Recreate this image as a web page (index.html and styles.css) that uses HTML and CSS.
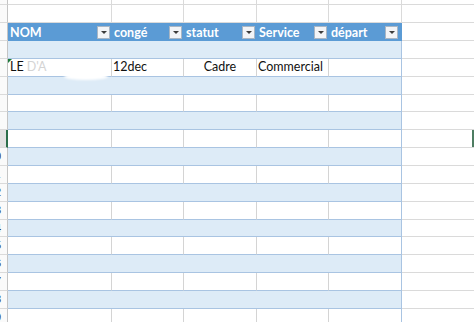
FILE: index.html
```html
<!DOCTYPE html>
<html lang="fr">
<head>
<meta charset="utf-8">
<link rel="stylesheet" href="styles.css">
</head>
<body>
<div class="sheet">
  <div class="row"><div class="rh"></div><div class="c"></div><div class="c"></div><div class="c"></div><div class="c"></div><div class="c"></div><div class="c f"></div></div>
  <div class="row"><div class="rh"><span>2</span></div><div class="c"></div><div class="c"></div><div class="c"></div><div class="c"></div><div class="c"></div><div class="c f"></div></div>
  <div class="row">
    <div class="rh"><span>3</span></div>
    <div class="th"><span>NOM</span><span class="btn"></span></div>
    <div class="th"><span>congé</span><span class="btn"></span></div>
    <div class="th"><span>statut</span><span class="btn"></span></div>
    <div class="th"><span>Service</span><span class="btn"></span></div>
    <div class="th th-last"><span>départ</span><span class="btn"></span></div>
    <div class="c f"></div>
  </div>
  <div class="row"><div class="rh"><span>4</span></div><div class="band"></div><div class="c f"></div></div>
  <div class="row">
    <div class="rh"><span>5</span></div>
    <div class="tw name"><span class="flag"></span>LE <span class="faint">D'A</span><span class="smudge"></span></div>
    <div class="tw">12dec</div>
    <div class="tw center">Cadre</div>
    <div class="tw">Commercial</div>
    <div class="tw last"></div>
    <div class="c f"></div>
  </div>
  <div class="row"><div class="rh"><span>6</span></div><div class="band"></div><div class="c f"></div></div>
  <div class="row"><div class="rh"><span>7</span></div><div class="tw"></div><div class="tw"></div><div class="tw"></div><div class="tw"></div><div class="tw last"></div><div class="c f"></div></div>
  <div class="row"><div class="rh"><span>8</span></div><div class="band"></div><div class="c f"></div></div>
  <div class="row"><div class="rh sel"><span>9</span></div><div class="tw"></div><div class="tw"></div><div class="tw"></div><div class="tw"></div><div class="tw last"></div><div class="c f sel-edge"></div></div>
  <div class="row"><div class="rh"><span>10</span></div><div class="band"></div><div class="c f"></div></div>
  <div class="row"><div class="rh"><span>11</span></div><div class="tw"></div><div class="tw"></div><div class="tw"></div><div class="tw"></div><div class="tw last"></div><div class="c f"></div></div>
  <div class="row"><div class="rh"><span>12</span></div><div class="band"></div><div class="c f"></div></div>
  <div class="row"><div class="rh"><span>13</span></div><div class="tw"></div><div class="tw"></div><div class="tw"></div><div class="tw"></div><div class="tw last"></div><div class="c f"></div></div>
  <div class="row"><div class="rh"><span>14</span></div><div class="band"></div><div class="c f"></div></div>
  <div class="row"><div class="rh"><span>15</span></div><div class="tw"></div><div class="tw"></div><div class="tw"></div><div class="tw"></div><div class="tw last"></div><div class="c f"></div></div>
  <div class="row"><div class="rh"><span>16</span></div><div class="band"></div><div class="c f"></div></div>
  <div class="row"><div class="rh"><span>17</span></div><div class="tw"></div><div class="tw"></div><div class="tw"></div><div class="tw"></div><div class="tw last"></div><div class="c f"></div></div>
  <div class="row"><div class="rh"><span>18</span></div><div class="band"></div><div class="c f"></div></div>
  <div class="row"><div class="rh"><span>19</span></div><div class="tw"></div><div class="tw"></div><div class="tw"></div><div class="tw"></div><div class="tw last"></div><div class="c f"></div></div>
</div>
</body>
</html>
```

FILE: styles.css
```css
html, body {
  margin: 0;
  padding: 0;
  background: #ffffff;
  overflow: hidden;
}

body {
  font-family: Lato, "Liberation Sans", sans-serif;
  font-size: 12.5px;
  color: #111;
}

.sheet {
  display: grid;
  grid-template-rows: 5px 18px 18px repeat(16, 17.87px);
  width: 474px;
}

.row {
  display: grid;
  grid-template-columns: 8px 104px 72px 73px 72px 73px 1fr;
}

.row > div {
  box-sizing: border-box;
  min-width: 0;
}

.rh {
  background: #fafafa;
  border-right: 1px solid #c4c4c4;
  border-bottom: 1px solid #dadada;
  overflow: hidden;
}

.rh span {
  display: block;
  width: 24px;
  margin-left: -17px;
  text-align: center;
  font-family: "Liberation Sans", sans-serif;
  font-size: 11px;
  line-height: 16px;
  color: #333;
}

.rh.sel {
  background: #e1e1e1;
  border-right: 2px solid #2b6e4a;
}

.c {
  border-right: 1px solid #dadada;
  border-bottom: 1px solid #dadada;
}

.c.f {
  border-right: none;
}

.c.sel-edge {
  box-shadow: inset -2px 0 0 #4e7d62;
}

.th {
  background: #5b9bd5;
  color: #ffffff;
  font-weight: 700;
  display: flex;
  align-items: center;
  justify-content: space-between;
  padding: 0 2px 0 2px;
  white-space: nowrap;
}

.th-last {
  padding-right: 4px;
}

.btn {
  width: 13px;
  height: 13px;
  box-sizing: border-box;
  border: 1px solid #a9b6c4;
  background: #f2f4f7;
  display: flex;
  align-items: center;
  justify-content: center;
}

.btn::after {
  content: "";
  width: 0;
  height: 0;
  border-left: 3px solid transparent;
  border-right: 3px solid transparent;
  border-top: 3px solid #3c3c3c;
  margin-top: 1px;
}

.band {
  grid-column: span 5;
  background: #ddebf7;
  border-bottom: 1px solid #a9c4e2;
  border-right: 1px solid #a9c4e2;
}

.tw {
  background: #ffffff;
  border-right: 1px solid #d4d4d4;
  border-bottom: 1px solid #a9c4e2;
  display: flex;
  align-items: center;
  padding-left: 1px;
  white-space: nowrap;
  line-height: 1;
}

.tw.last {
  border-right: 1px solid #a9c4e2;
}

.tw.center {
  justify-content: center;
  padding-left: 0;
}

.tw.name {
  position: relative;
  padding-left: 2px;
}

.faint {
  color: #d4d4d4;
  margin-left: 3px;
}

.flag {
  position: absolute;
  top: 0;
  left: 0;
  width: 0;
  height: 0;
  border-top: 4px solid #1f7a3c;
  border-right: 4px solid transparent;
}

.smudge {
  position: absolute;
  left: 56px;
  top: 14px;
  width: 44px;
  height: 7px;
  background: #ffffff;
  border-radius: 50%;
  filter: blur(1px);
  z-index: 2;
}
```
